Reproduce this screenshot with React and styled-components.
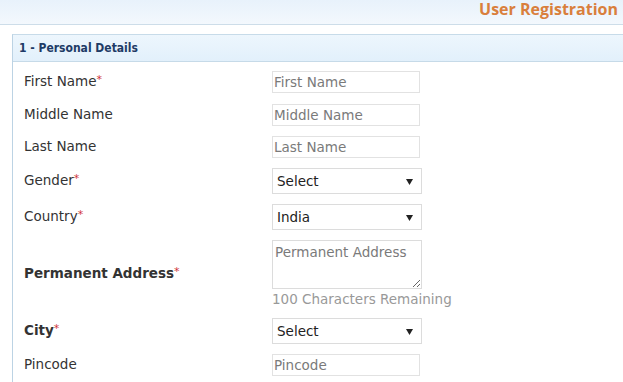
import React from "react";
import styled, { createGlobalStyle } from "styled-components";

const Global = createGlobalStyle`
  html, body { margin: 0; padding: 0; background: #fff; }
  body { font-family: "DejaVu Sans", Verdana, sans-serif; }
  * { box-sizing: border-box; }
`;

const Page = styled.div`
  width: 623px;
  height: 382px;
  overflow: hidden;
  background: #fff;
`;

const TopBar = styled.div`
  height: 25px;
  border-bottom: 1px solid #cddde9;
  background: linear-gradient(#e8f2fb, #f3f8fd);
  display: flex;
  align-items: flex-start;
  justify-content: flex-end;
  padding: 0 5px 0 0;
`;

const Title = styled.h1`
  margin: 0;
  font-family: "Open Sans", sans-serif;
  font-weight: 700;
  font-size: 16px;
  color: #d97f3c;
  line-height: 18px;
`;

const Body = styled.div`
  padding: 9px 0 0 12px;
`;

const Panel = styled.section`
  border-left: 1px solid #bcd3e4;
  border-top: 1px solid #c7dbe9;
`;

const PanelHead = styled.div`
  height: 27px;
  display: flex;
  align-items: center;
  padding-left: 6px;
  background: linear-gradient(#edf6fd, #e2f0fb);
  border-bottom: 1px solid #c6dae8;
  font-family: "DejaVu Sans Condensed", "DejaVu Sans", sans-serif;
  font-weight: 700;
  font-size: 12px;
  color: #1e3b66;
`;

const Form = styled.div`
  padding: 9px 0 0 11px;
  display: flex;
  flex-direction: column;
`;

const Row = styled.div`
  display: grid;
  grid-template-columns: 248px 170px;
  align-items: center;
  margin-bottom: ${(p) => p.$gap}px;
`;

const Label = styled.label`
  font-size: 13.5px;
  color: #333;
  font-weight: ${(p) => (p.$bold ? 700 : 400)};
  position: relative;
  top: -1px;
`;

const Star = styled.span`
  color: #d0343a;
  font-size: 11px;
  vertical-align: top;
  font-weight: 400;
`;

const TextInput = styled.input`
  width: 148px;
  height: 22px;
  border: 1px solid #e2e2e2;
  padding: 0 0 0 1px;
  font-family: "DejaVu Sans", sans-serif;
  font-size: 13.5px;
  color: #333;
  outline: none;
  &::placeholder { color: #7a7a7a; }
`;

const arrow = encodeURIComponent(
  '<svg xmlns="http://www.w3.org/2000/svg" width="7" height="7" viewBox="0 0 7 7"><path d="M0 1h7L3.5 7z" fill="#222"/></svg>'
);

const Select = styled.select`
  width: 150px;
  height: 26px;
  border: 1px solid #dcdcdc;
  border-radius: 0;
  background: #fff url("data:image/svg+xml,${arrow}") no-repeat right 8px center;
  appearance: none;
  -webkit-appearance: none;
  padding: 0 0 0 4px;
  font-family: "DejaVu Sans", sans-serif;
  font-size: 13.5px;
  color: #222;
  outline: none;
`;

const AddressBox = styled.div`
  display: flex;
  flex-direction: column;
`;

const TextArea = styled.textarea`
  width: 150px;
  height: 49px;
  border: 1px solid #dcdcdc;
  padding: 3px 2px;
  font-family: "DejaVu Sans", sans-serif;
  font-size: 13.5px;
  color: #333;
  outline: none;
  display: block;
  &::placeholder { color: #7a7a7a; }
`;

const Counter = styled.div`
  margin-top: 2px;
  font-size: 13.5px;
  color: #999;
  white-space: nowrap;
`;

const F = ({ children, req, bold }) => (
  <Label $bold={bold}>
    {children}
    {req && <Star>*</Star>}
  </Label>
);

export default function App() {
  return (
    <Page>
      <Global />
      <TopBar>
        <Title>User Registration</Title>
      </TopBar>
      <Body>
        <Panel>
          <PanelHead>1 - Personal Details</PanelHead>
          <Form>
            <Row $gap={11}>
              <F req>First Name</F>
              <TextInput placeholder="First Name" />
            </Row>
            <Row $gap={10}>
              <F>Middle Name</F>
              <TextInput placeholder="Middle Name" />
            </Row>
            <Row $gap={10}>
              <F>Last Name</F>
              <TextInput placeholder="Last Name" />
            </Row>
            <Row $gap={10}>
              <F req>Gender</F>
              <Select defaultValue="">
                <option value="">Select</option>
              </Select>
            </Row>
            <Row $gap={10}>
              <F req>Country</F>
              <Select defaultValue="India">
                <option>India</option>
              </Select>
            </Row>
            <Row $gap={11}>
              <F req bold>Permanent Address</F>
              <AddressBox>
                <TextArea placeholder="Permanent Address" />
                <Counter>100 Characters Remaining</Counter>
              </AddressBox>
            </Row>
            <Row $gap={10}>
              <F req bold>City</F>
              <Select defaultValue="">
                <option value="">Select</option>
              </Select>
            </Row>
            <Row $gap={10}>
              <F>Pincode</F>
              <TextInput placeholder="Pincode" />
            </Row>
          </Form>
        </Panel>
      </Body>
    </Page>
  );
}
